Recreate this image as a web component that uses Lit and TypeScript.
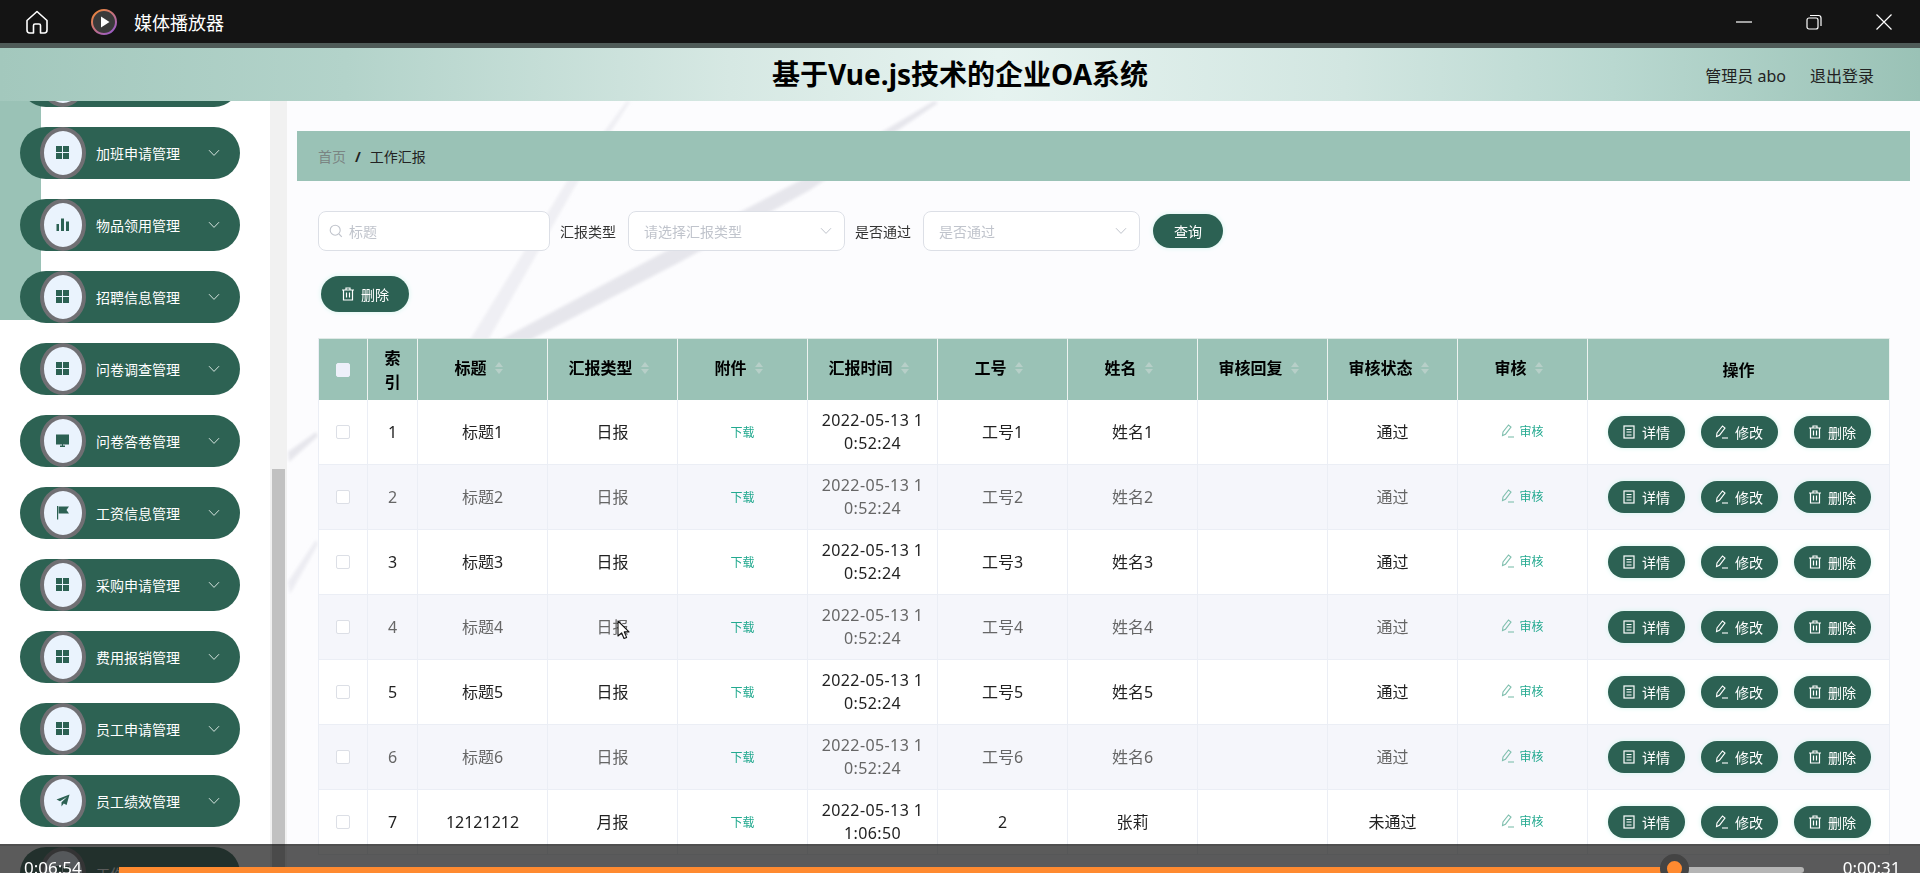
import { LitElement, html, css, svg } from 'lit';
import { customElement } from 'lit/decorators.js';

const grid = svg`<rect x="0" y="0" width="6" height="6"/><rect x="7" y="0" width="6" height="6"/><rect x="0" y="7" width="6" height="6"/><rect x="7" y="7" width="6" height="6"/>`;
const bars = svg`<rect x="0.5" y="6" width="2.5" height="7"/><rect x="5" y="0.5" width="3" height="12.5"/><rect x="10" y="3.5" width="3" height="9.5"/>`;
const monitor = svg`<rect x="0" y="0.5" width="13" height="10"/><rect x="4" y="11.5" width="5" height="1.5"/><rect x="6" y="10" width="1" height="2"/>`;
const flag = svg`<rect x="1" y="0" width="1.2" height="13.5"/><path d="M2.6 0.5H13L10.5 4L13 7.5H2.6Z"/>`;
const send = svg`<path d="M13.5 0.5L0.5 5.5L4 7.2L11 3L5.5 8.2V12.5L7.8 9.6L10.6 11Z"/>`;

const menus = [
  { name: '请假申请管理', icon: grid },
  { name: '加班申请管理', icon: grid },
  { name: '物品领用管理', icon: bars },
  { name: '招聘信息管理', icon: grid },
  { name: '问卷调查管理', icon: grid },
  { name: '问卷答卷管理', icon: monitor },
  { name: '工资信息管理', icon: flag },
  { name: '采购申请管理', icon: grid },
  { name: '费用报销管理', icon: grid },
  { name: '员工申请管理', icon: grid },
  { name: '员工绩效管理', icon: send },
  { name: '工作汇报管理', icon: grid },
];

const columns = ['标题', '汇报类型', '附件', '汇报时间', '工号', '姓名', '审核回复', '审核状态', '审核'];

const rows = [
  ['1', '标题1', '日报', '2022-05-13 10:52:24', '工号1', '姓名1', '通过'],
  ['2', '标题2', '日报', '2022-05-13 10:52:24', '工号2', '姓名2', '通过'],
  ['3', '标题3', '日报', '2022-05-13 10:52:24', '工号3', '姓名3', '通过'],
  ['4', '标题4', '日报', '2022-05-13 10:52:24', '工号4', '姓名4', '通过'],
  ['5', '标题5', '日报', '2022-05-13 10:52:24', '工号5', '姓名5', '通过'],
  ['6', '标题6', '日报', '2022-05-13 10:52:24', '工号6', '姓名6', '通过'],
  ['7', '12121212', '月报', '2022-05-13 11:06:50', '2', '张莉', '未通过'],
];

const chevron = html`<svg class="chev" viewBox="0 0 12 8" width="12" height="8" fill="none" stroke="currentColor" stroke-width="1"><path d="M1 1.2L6 6.4L11 1.2"/></svg>`;
const docIcon = html`<svg viewBox="0 0 14 14" width="14" height="14" fill="none" stroke="currentColor" stroke-width="1.2"><rect x="2" y="1" width="10" height="12"/><path d="M4.5 4.5H9.5M4.5 7H9.5M4.5 10H9.5"/></svg>`;
const editIcon = html`<svg viewBox="0 0 14 14" width="14" height="14" fill="none" stroke="currentColor" stroke-width="1.1"><path d="M1.5 11.5L2 8L7.5 1L10 3L4.5 10.2Z"/><path d="M7 13H13"/></svg>`;
const trashIcon = html`<svg viewBox="0 0 14 14" width="14" height="14" fill="none" stroke="currentColor" stroke-width="1.2"><path d="M1 3H13M5 3V1H9V3M2.5 3V13H11.5V3M5.5 5.5V10.5M8.5 5.5V10.5"/></svg>`;

@customElement('app-root')
export class AppRoot extends LitElement {
  static styles = css`
    :host {
      display: block;
      position: relative;
      width: 1920px;
      height: 873px;
      overflow: hidden;
      font-family: 'Noto Sans', 'Noto Sans CJK SC', sans-serif;
      color: #222;
      background: #fff;
    }
    .page {
      display: flex;
      flex-direction: column;
      height: 873px;
    }
    .titlebar {
      display: flex;
      align-items: center;
      flex: none;
      height: 43px;
      background: #141414;
      border-bottom: 5px solid #4f5b58;
      color: #fff;
    }
    .home {
      margin-left: 25px;
    }
    .logo {
      margin-left: 42px;
    }
    .app-name {
      margin-left: 17px;
      font-size: 18px;
    }
    .win {
      display: flex;
      align-items: center;
      gap: 54px;
      margin-left: auto;
      margin-right: 28px;
    }
    .topnav {
      display: grid;
      grid-template-columns: 1fr auto 1fr;
      align-items: center;
      flex: none;
      height: 53px;
      background: linear-gradient(90deg, #a3c8bd 0%, #b3d3ca 18%, #d6e8e3 38%, #e6f3f0 52%, #d2e6e1 70%, #b9d8d0 84%, #9ac2b6 100%);
    }
    .topnav h1 {
      grid-column: 2;
      margin: 0;
      font-size: 28px;
      font-weight: 700;
      line-height: 1.2;
      color: #000;
    }
    .user {
      display: flex;
      justify-content: flex-end;
      gap: 24px;
      padding-right: 46px;
      font-size: 16px;
      color: #222;
    }
    .body {
      display: flex;
      flex: 1;
      min-height: 0;
    }
    .sidebar {
      position: relative;
      flex: none;
      width: 270px;
      overflow: hidden;
      background: #fff;
    }
    .side-block {
      position: absolute;
      left: 0;
      top: 0;
      width: 41px;
      height: 219px;
      background: #9ac2b6;
    }
    .menu {
      position: relative;
      display: flex;
      flex-direction: column;
      gap: 20px;
      margin-top: -46px;
      margin-left: 20px;
    }
    .pill {
      display: flex;
      align-items: center;
      flex: none;
      width: 220px;
      height: 52px;
      border-radius: 26px;
      background: #2d6253;
      color: #fff;
      font-size: 14px;
    }
    .circle {
      display: flex;
      align-items: center;
      justify-content: center;
      flex: none;
      box-sizing: border-box;
      width: 46px;
      height: 52px;
      margin-left: 20px;
      border: 4px solid #706f73;
      border-radius: 50%;
      background: #eaf3fd;
      color: #2c6153;
    }
    .pill span {
      margin-left: 10px;
    }
    .pill .chev {
      margin-left: auto;
      margin-right: 20px;
      color: #d6e4df;
    }
    .scrollbar {
      flex: none;
      box-sizing: border-box;
      width: 17px;
      padding: 368px 2px 0;
      background: #f1f1f1;
    }
    .thumb {
      height: 404px;
      background: #c1c1c1;
    }
    .main {
      position: relative;
      flex: 1;
      min-width: 0;
      background: #fcfcfe;
    }
    .streaks {
      position: absolute;
      left: 0;
      top: 0;
    }
    .crumb {
      position: relative;
      display: flex;
      align-items: center;
      height: 50px;
      margin: 30px 10px 0;
      padding-left: 21px;
      background: #9ac2b6;
      font-size: 14px;
      color: #222;
    }
    .crumb .home-link {
      color: #7a8583;
    }
    .crumb b {
      margin: 0 9px;
      font-weight: 700;
    }
    .filters {
      position: relative;
      display: flex;
      align-items: center;
      height: 40px;
      margin: 30px 0 0 31px;
      font-size: 14px;
    }
    .field {
      display: flex;
      align-items: center;
      box-sizing: border-box;
      height: 40px;
      border: 1px solid #dcdfe6;
      border-radius: 8px;
      background: #fff;
      color: #c0c4cc;
    }
    .field.search {
      width: 232px;
      padding-left: 10px;
      gap: 6px;
    }
    .field.select {
      justify-content: space-between;
      width: 217px;
      padding: 0 12px 0 15px;
    }
    .label {
      margin: 0 12px 0 10px;
      color: #333;
    }
    .btn {
      display: inline-flex;
      align-items: center;
      justify-content: center;
      gap: 6px;
      box-sizing: border-box;
      border-radius: 18px;
      background: #2c6153;
      color: #fff;
      font-size: 14px;
      box-shadow: 0 0 5px #d4f5ee;
    }
    .btn.query {
      width: 70px;
      height: 34px;
      margin-left: 13px;
    }
    .btn.bulk {
      position: relative;
      display: flex;
      width: 88px;
      height: 36px;
      margin: 25px 0 0 34px;
    }
    .table {
      position: relative;
      width: 1572px;
      margin: 26px 0 0 31px;
      table-layout: fixed;
      border-collapse: separate;
      border-spacing: 0;
      font-size: 16px;
      text-align: center;
    }
    th {
      height: 61px;
      padding: 0;
      border-top: 1px solid #dfe9e6;
      border-right: 1px solid #eef3f1;
      background: #9ac2b6;
      color: #000;
      font-weight: 700;
      line-height: 24px;
    }
    th:first-child,
    td:first-child {
      border-left: 1px solid #ebeef5;
    }
    td {
      height: 64px;
      padding: 0;
      border-right: 1px solid #ebeef5;
      border-bottom: 1px solid #ebeef5;
      background: #fff;
      color: #222;
      line-height: 23px;
    }
    tr.alt td {
      background: #f5f6fb;
      color: #666;
    }
    th > .head {
      display: inline-flex;
      align-items: center;
      transform: translateY(-2px);
    }
    .sort {
      display: flex;
      flex-direction: column;
      align-items: center;
      gap: 2px;
      width: 24px;
    }
    .sort i {
      width: 0;
      height: 0;
      border-left: 4px solid transparent;
      border-right: 4px solid transparent;
    }
    .sort i:first-child {
      border-bottom: 5px solid #b7cfc8;
    }
    .sort i:last-child {
      border-top: 5px solid #b7cfc8;
    }
    .check {
      display: block;
      box-sizing: border-box;
      width: 14px;
      height: 14px;
      margin: 0 auto;
      border: 1px solid #dcdfe6;
      border-radius: 2px;
      background: #fff;
    }
    th .check {
      background: #eef0fa;
      border-color: #eef0fa;
    }
    .date {
      letter-spacing: 0.4px;
    }
    .link {
      color: #22a98f;
      font-size: 12px;
    }
    .link.audit {
      display: inline-flex;
      align-items: center;
      gap: 4px;
    }
    .link.audit svg {
      color: #7fbfae;
    }
    .ops {
      display: flex;
      justify-content: center;
      gap: 16px;
      padding-left: 1px;
    }
    .ops .btn {
      width: 77px;
      height: 32px;
    }
    .player {
      position: absolute;
      left: 0;
      right: 0;
      bottom: 0;
      display: flex;
      height: 27px;
      border-top: 2px solid rgba(0, 0, 0, 0.13);
      background: rgba(30, 30, 30, 0.73);
      color: #fff;
      font-size: 17px;
      overflow: hidden;
    }
    .time {
      flex: none;
      margin-top: 10px;
      line-height: 24px;
    }
    .time.now {
      margin-left: 24px;
    }
    .time.left {
      margin-left: 39px;
    }
    .track {
      display: flex;
      flex: none;
      width: 1685px;
      height: 6px;
      margin: 21px 0 0 37px;
      border-radius: 0 3px 3px 0;
      background: #b5b5b5;
    }
    .track .done {
      width: 1542px;
      background: #ff8a30;
    }
    .knob {
      position: absolute;
      left: 1660px;
      top: 8px;
      box-sizing: border-box;
      width: 29px;
      height: 29px;
      border-radius: 50%;
      border: 7px solid #444;
      background: #ff8a30;
    }
    .cursor {
      position: absolute;
      left: 617px;
      top: 620px;
    }
  `;

  private dateLines(value: string) {
    return html`${value.slice(0, 12)}<br />${value.slice(12)}`;
  }

  render() {
    return html`
      <div class="page">
        <div class="titlebar">
          <svg class="home" viewBox="0 0 24 24" width="24" height="24" fill="none" stroke="#fff" stroke-width="1.6" stroke-linejoin="round">
            <path d="M2 10.5L12 1.5L22 10.5V20C22 21.7 21 23 19.3 23H15.5V15.5C15.5 14.6 14.9 14 14 14H10C9.1 14 8.5 14.6 8.5 15.5V23H4.7C3 23 2 21.7 2 20Z" />
          </svg>
          <svg class="logo" viewBox="0 0 26 26" width="26" height="26">
            <defs>
              <linearGradient id="lg" x1="0" y1="0" x2="0.8" y2="1">
                <stop offset="0" stop-color="#f58a2e" />
                <stop offset="1" stop-color="#9a5cc8" />
              </linearGradient>
            </defs>
            <circle cx="13" cy="13" r="12" fill="#3a3a3a" stroke="url(#lg)" stroke-width="2" />
            <path d="M10 7.5L18.5 13L10 18.5Z" fill="#fff" />
          </svg>
          <span class="app-name">媒体播放器</span>
          <div class="win">
            <svg viewBox="0 0 16 16" width="16" height="16" stroke="#fff" fill="none" stroke-width="1.2"><path d="M0 8H16" /></svg>
            <svg viewBox="0 0 16 16" width="16" height="16" stroke="#fff" fill="none" stroke-width="1.2">
              <rect x="1" y="4" width="11" height="11" rx="2" />
              <path d="M4 1.5H12.5C14 1.5 15 2.5 15 4V12" />
            </svg>
            <svg viewBox="0 0 16 16" width="16" height="16" stroke="#fff" fill="none" stroke-width="1.2"><path d="M0.5 0.5L15.5 15.5M15.5 0.5L0.5 15.5" /></svg>
          </div>
        </div>

        <div class="topnav">
          <h1>基于Vue.js技术的企业OA系统</h1>
          <div class="user"><span>管理员 abo</span><span>退出登录</span></div>
        </div>

        <div class="body">
          <aside class="sidebar">
            <div class="side-block"></div>
            <div class="menu">
              ${menus.map(
                (m) => html`
                  <div class="pill">
                    <div class="circle"><svg viewBox="0 0 14 14" width="14" height="14" fill="currentColor">${m.icon}</svg></div>
                    <span>${m.name}</span>
                    ${chevron}
                  </div>
                `
              )}
            </div>
          </aside>
          <div class="scrollbar"><div class="thumb"></div></div>

          <main class="main">
            <svg class="streaks" width="1633" height="772" viewBox="287 101 1633 772" fill="#e6e6ec">
              <defs><filter id="blur"><feGaussianBlur stdDeviation="1.6" /></filter></defs>
              <g filter="url(#blur)">
                <path d="M500 340L668 250L801 180L934 101L938 103L810 190L680 262L530 340Z" />
                <path d="M470 340L566 183L627 101L630 102L574 188L488 340Z" opacity="0.6" />
                <path d="M288 452L316 432L318 436L289 462Z" />
                <path d="M288 582L316 540L318 544L290 594Z" opacity="0.7" />
              </g>
            </svg>
            <nav class="crumb"><span class="home-link">首页</span><b>/</b><span>工作汇报</span></nav>
            <div class="filters">
              <div class="field search">
                <svg viewBox="0 0 14 14" width="14" height="14" fill="none" stroke="#c0c4cc" stroke-width="1.1"><circle cx="6.2" cy="6.2" r="5" /><path d="M10 10L12.8 12.8" /></svg>
                标题
              </div>
              <span class="label">汇报类型</span>
              <div class="field select">请选择汇报类型 ${chevron}</div>
              <span class="label">是否通过</span>
              <div class="field select">是否通过 ${chevron}</div>
              <div class="btn query">查询</div>
            </div>
            <div class="btn bulk">${trashIcon} 删除</div>

            <table class="table">
              <colgroup>
                <col style="width:50px" />
                <col style="width:50px" />
                ${columns.map(() => html`<col style="width:130px" />`)}
                <col />
              </colgroup>
              <thead>
                <tr>
                  <th><span class="check"></span></th>
                  <th>索<br />引</th>
                  ${columns.map(
                    (c) => html`<th><span class="head">${c}<span class="sort"><i></i><i></i></span></span></th>`
                  )}
                  <th>操作</th>
                </tr>
              </thead>
              <tbody>
                ${rows.map(
                  (r, i) => html`
                    <tr class=${i % 2 ? 'alt' : ''}>
                      <td><span class="check"></span></td>
                      <td>${r[0]}</td>
                      <td>${r[1]}</td>
                      <td>${r[2]}</td>
                      <td><span class="link">下载</span></td>
                      <td class="date">${this.dateLines(r[3])}</td>
                      <td>${r[4]}</td>
                      <td>${r[5]}</td>
                      <td></td>
                      <td>${r[6]}</td>
                      <td><span class="link audit">${editIcon}审核</span></td>
                      <td>
                        <div class="ops">
                          <div class="btn">${docIcon} 详情</div>
                          <div class="btn">${editIcon} 修改</div>
                          <div class="btn">${trashIcon} 删除</div>
                        </div>
                      </td>
                    </tr>
                  `
                )}
              </tbody>
            </table>
          </main>
        </div>
      </div>

      <svg class="cursor" viewBox="0 0 14 20" width="14" height="20">
        <path d="M1 1V16L4.6 12.8L7 18.5L9.6 17.4L7.2 11.9H12Z" fill="#fff" stroke="#111" stroke-width="1.1" stroke-linejoin="round" />
      </svg>

      <div class="player">
        <span class="time now">0:06:54</span>
        <div class="track"><div class="done"></div></div>
        <div class="knob"></div>
        <span class="time left">0:00:31</span>
      </div>
    `;
  }
}

declare global {
  interface HTMLElementTagNameMap {
    'app-root': AppRoot;
  }
}
